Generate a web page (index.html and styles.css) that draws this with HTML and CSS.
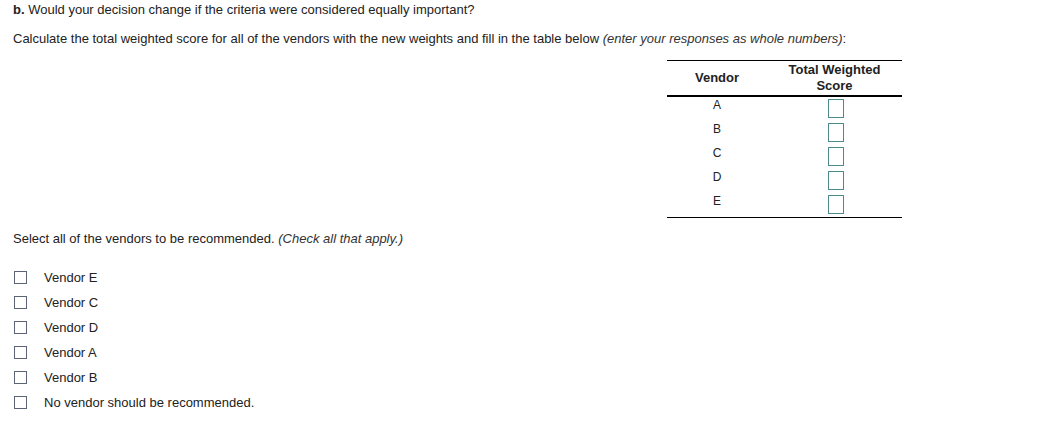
FILE: index.html
```html
<!DOCTYPE html>
<html>
<head>
<meta charset="utf-8">
<link rel="stylesheet" href="styles.css">
</head>
<body>
<div class="page">
  <p class="q"><b>b.</b> Would your decision change if the criteria were considered equally important?</p>
  <p class="instr">Calculate the total weighted score for all of the vendors with the new weights and fill in the table below <i>(enter your responses as whole numbers)</i>:</p>
  <div class="tablewrap">
    <table class="scores">
      <thead>
        <tr><th class="c1">Vendor</th><th class="c2">Total Weighted<br>Score</th></tr>
      </thead>
      <tbody>
        <tr><td>A</td><td><span class="box"></span></td></tr>
        <tr><td>B</td><td><span class="box"></span></td></tr>
        <tr><td>C</td><td><span class="box"></span></td></tr>
        <tr><td>D</td><td><span class="box"></span></td></tr>
        <tr><td>E</td><td><span class="box"></span></td></tr>
      </tbody>
    </table>
  </div>
  <p class="select">Select all of the vendors to be recommended. <i>(Check all that apply.)</i></p>
  <ul class="checks">
    <li><span class="cb"></span>Vendor E</li>
    <li><span class="cb"></span>Vendor C</li>
    <li><span class="cb"></span>Vendor D</li>
    <li><span class="cb"></span>Vendor A</li>
    <li><span class="cb"></span>Vendor B</li>
    <li><span class="cb"></span>No vendor should be recommended.</li>
  </ul>
</div>
</body>
</html>
```
FILE: styles.css
```css
html, body { margin: 0; padding: 0; background: #fff; }
body {
  font-family: "Liberation Sans", Arial, sans-serif;
  font-size: 13px;
  color: #222;
}
.page { padding: 2px 0 0 13px; }
p { margin: 0; }
.q { line-height: 15px; }
.instr { margin-top: 14px; line-height: 15px; }
.instr i, .select i { color: #333; }
.tablewrap { display: flex; padding-left: 654px; margin-top: 14px; }
.scores { border-collapse: collapse; width: 235px; }
.scores thead tr { border-top: 1px solid #000; border-bottom: 2px solid #000; }
.scores tbody { border-bottom: 1px solid #000; }
.scores th { font-weight: bold; font-size: 13px; line-height: 16px; padding: 1px 0; color: #222; }
.scores th.c1 { width: 100px; }
.scores td { text-align: center; vertical-align: top; padding: 0; height: 24px; font-size: 12px; line-height: 16px; }
.box { display: block; width: 14px; height: 17px; margin: 2px auto 0; border: 1px solid #4f8a8b; position: relative; left: 1px; }
.select { margin-top: 13px; line-height: 15px; }
.checks { list-style: none; margin: 19px 0 0; padding: 0; }
.checks li { display: flex; align-items: center; height: 25px; line-height: 15px; }
.cb { display: inline-block; width: 11px; height: 11px; border: 1px solid #5d6476; margin: 0 17px 0 1px; }
```
